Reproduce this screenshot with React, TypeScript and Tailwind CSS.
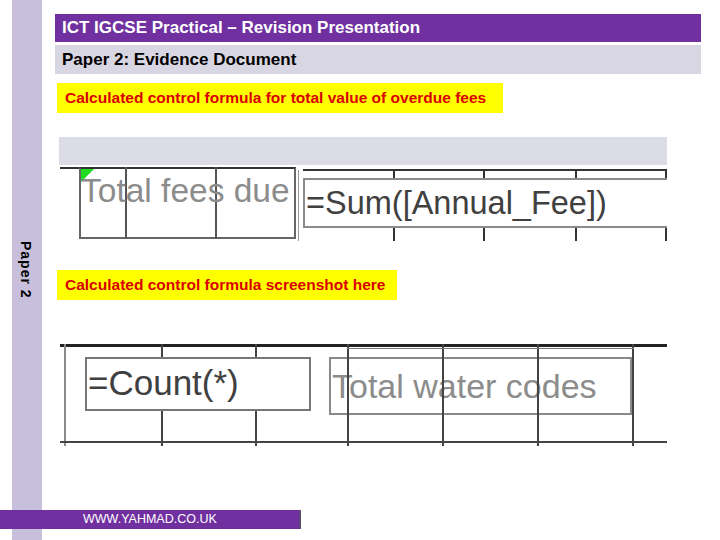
import React from "react";

const sans = { fontFamily: '"Liberation Sans", Arial, sans-serif' };

// Access form-design screenshot: controls sit on a free canvas
function FeesShot() {
  const ticks = [334, 424, 516, 606];
  return (
    <div className="flex flex-col w-[608px]">
      <div className="h-[28px] bg-[#dcdce6]" />
      <div className="relative h-[76px] overflow-hidden bg-white">
        <div className="absolute left-[1px] top-[2px] w-[20px] h-[2px] bg-[#333]" />
        <div className="absolute left-[20px] top-[2px] w-[217px] h-[72px] border-2 border-[#666] border-t-[#333]" />
        <div className="absolute left-[66px] top-[2px] w-[2px] h-[72px] bg-[#555]" />
        <div className="absolute left-[156px] top-[2px] w-[2px] h-[72px] bg-[#555]" />
        <div className="absolute left-[22px] top-[4px] w-[13px] h-[13px] bg-[#1fdc1f] [clip-path:polygon(0_0,100%_0,0_100%)]" />
        <div className="absolute left-[22px] top-[9px] text-[33.5px] leading-none text-[#8c8c8c] whitespace-nowrap">
          Total fees due
        </div>
        <div className="absolute left-[239px] top-[5px] w-[1px] h-[71px] bg-[#9a9a9a]" />
        <div className="absolute left-[244px] top-[4px] w-[364px] h-[2px] bg-[#333]" />
        {ticks.map((x) => (
          <React.Fragment key={x}>
            <div className="absolute top-[4px] w-[2px] h-[10px] bg-[#333]" style={{ left: x }} />
            <div className="absolute top-[63px] w-[2px] h-[13px] bg-[#333]" style={{ left: x }} />
          </React.Fragment>
        ))}
        <div className="absolute left-[244px] top-[13px] w-[370px] h-[50px] border-2 border-[#8a8a8a] bg-white">
          <div className="pl-[1px] pt-[7px] text-[32.5px] leading-none text-[#404040] whitespace-nowrap">
            =Sum([Annual_Fee])
          </div>
        </div>
      </div>
    </div>
  );
}

function CountShot() {
  const cols = [101, 195, 287, 382, 477, 572];
  return (
    <div className="relative w-[607px] h-[106px] overflow-hidden bg-white">
      <div className="absolute left-0 top-[4px] w-full h-[3px] bg-[#222] z-10" />
      <div className="absolute left-[4px] top-[4px] w-[2px] h-[102px] bg-[#8a8a8a] z-10" />
      {cols.map((x) => (
        <div key={x} className="absolute top-[4px] w-[2px] h-[102px] bg-[#444] z-10" style={{ left: x }} />
      ))}
      <div className="absolute left-0 top-[101px] w-full h-[2px] bg-[#444] z-10" />
      <div className="absolute left-[287px] top-[8px] w-[287px] h-[1px] bg-[#777] z-10" />
      <div className="absolute left-[25px] top-[17px] w-[226px] h-[54px] border-2 border-[#777] bg-white z-20">
        <div className="pl-[1px] pt-[6px] text-[35px] leading-none text-[#404040] whitespace-nowrap">
          =Count(*)
        </div>
      </div>
      <div className="absolute left-[269px] top-[17px] w-[303px] h-[58px] border-2 border-[#8a8a8a] z-0">
        <div className="pl-[1px] pt-[10px] text-[34px] leading-none text-[#8c8c8c] whitespace-nowrap">
          Total water codes
        </div>
      </div>
    </div>
  );
}

export default function App() {
  return (
    <div className="relative flex w-[720px] h-[540px] overflow-hidden bg-white" style={sans}>
      <div className="w-[12px] shrink-0" />
      <aside className="w-[30px] shrink-0 bg-[#c7bfdc] flex flex-col items-center pt-[241px] pr-[3px]">
        <span className="[writing-mode:vertical-rl] text-[14px] font-bold tracking-[1px] text-black leading-none">
          Paper 2
        </span>
      </aside>

      <main className="flex-1 flex flex-col pl-[13px] pr-[19px] pt-[14px]">
        <div className="h-[28px] bg-[#7030a0] flex items-center px-[7px] text-[17px] font-bold text-white">
          ICT IGCSE Practical – Revision Presentation
        </div>
        <div className="mt-[3px] h-[29px] bg-[#d9d6e3] flex items-center px-[7px] text-[17px] font-bold text-black">
          Paper 2: Evidence Document
        </div>

        <div className="mt-[9px] ml-[2px] w-[446px] h-[30px] bg-[#ffff00] flex items-center px-[8px] text-[15.5px] font-bold text-[#d90000]">
          Calculated control formula for total value of overdue fees
        </div>

        <div className="mt-[24px] ml-[4px]">
          <FeesShot />
        </div>

        <div className="mt-[29px] ml-[2px] w-[340px] h-[30px] bg-[#ffff00] flex items-center px-[8px] text-[15.5px] font-bold text-[#d90000]">
          Calculated control formula screenshot here
        </div>

        <div className="mt-[40px] ml-[5px]">
          <CountShot />
        </div>
      </main>

      <footer className="absolute left-0 top-[510px] w-[301px] h-[19px] bg-[#7030a0] border-r-2 border-[#5b4a70] flex items-center pl-[83px] text-[12.5px] text-white">
        WWW.YAHMAD.CO.UK
      </footer>
    </div>
  );
}
